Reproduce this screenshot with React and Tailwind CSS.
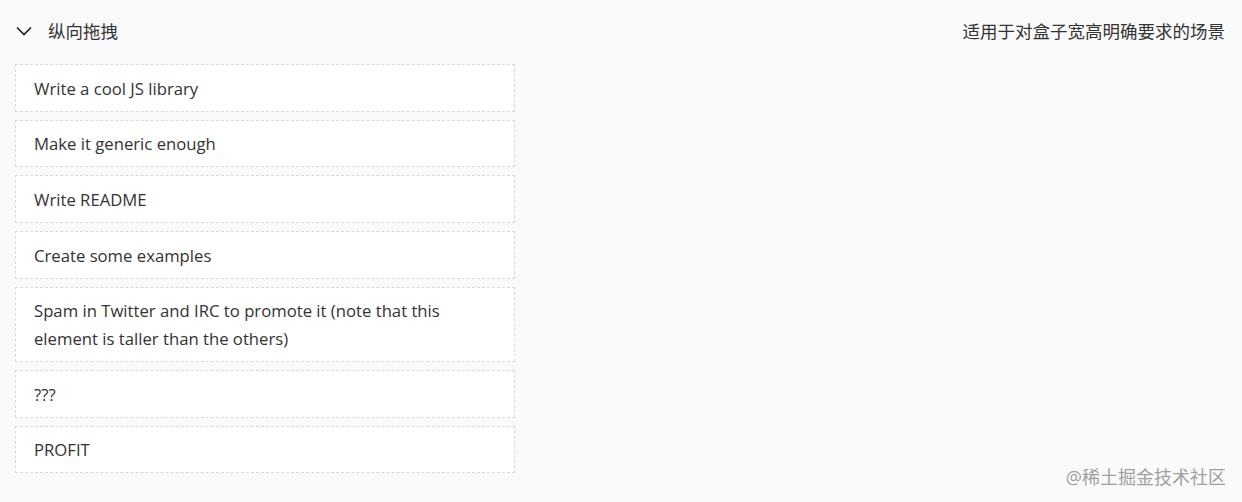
import React from "react";

const items = [
  "Write a cool JS library",
  "Make it generic enough",
  "Write README",
  "Create some examples",
  "Spam in Twitter and IRC to promote it (note that this element is taller than the others)",
  "???",
  "PROFIT",
];

export default function App() {
  return (
    <div
      className="w-[1242px] h-[502px] bg-[#fafafa] text-[#333] relative overflow-hidden"
      style={{ fontFamily: '"Open Sans", "Noto Sans CJK SC", sans-serif' }}
    >
      <div className="flex items-center justify-between h-[62px] pl-[16px] pr-[17px]">
        <div className="flex items-center">
          <svg width="16" height="10" viewBox="0 0 16 10" className="mr-[16px]">
            <path d="M1 1.5 L8 8.5 L15 1.5" fill="none" stroke="#222" strokeWidth="1.7" />
          </svg>
          <span className="text-[17.5px]">纵向拖拽</span>
        </div>
        <span className="text-[17.5px]">适用于对盒子宽高明确要求的场景</span>
      </div>
      <div className="flex flex-col gap-[8px] pl-[15px] mt-[2px]">
        {items.map((t) => (
          <div
            key={t}
            className="w-[500px] bg-white border border-dashed border-[#d9d9d9] px-[18px] pt-[9.7px] pb-[8.3px] text-[16.7px] leading-[27.67px]"
          >
            {t}
          </div>
        ))}
      </div>
      <div className="absolute right-[16px] bottom-[11px] text-[18px] text-[#a0a0a0]">
        @稀土掘金技术社区
      </div>
    </div>
  );
}
